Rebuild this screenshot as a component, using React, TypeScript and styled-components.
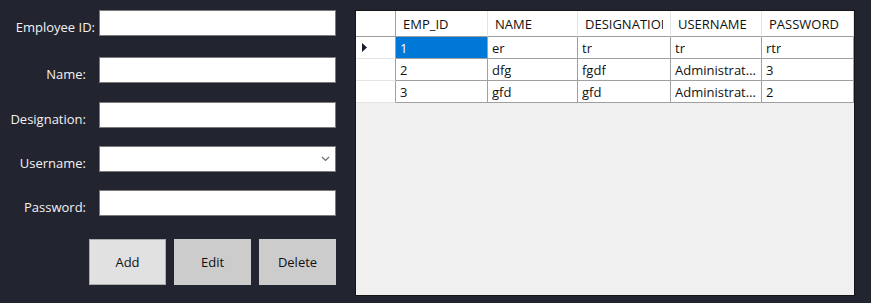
import React from 'react';
import styled, { createGlobalStyle } from 'styled-components';

const GlobalStyle = createGlobalStyle`
    html, body {
        margin: 0;
        padding: 0;
        background: #222430;
    }
    body {
        font-family: 'Open Sans', 'Liberation Sans', sans-serif;
        font-size: 13px;
    }
`;

const Page = styled.div`
    display: flex;
    align-items: flex-start;
    height: 303px;
    box-sizing: border-box;
    padding-top: 10px;
    background: #222430;
`;

const FormPanel = styled.div`
    display: flex;
    flex-direction: column;
    width: 336px;
`;

const FieldRow = styled.div<{ gapTop: number }>`
    display: flex;
    align-items: flex-start;
    height: 26px;
    margin-top: ${(p) => p.gapTop}px;
`;

const Label = styled.label<{ padRight: number }>`
    width: 99px;
    height: 26px;
    box-sizing: border-box;
    padding-right: ${(p) => p.padRight}px;
    padding-top: 8px;
    line-height: 18px;
    text-align: right;
    color: #f2f2f2;
    white-space: nowrap;
`;

const TextBox = styled.div`
    width: 237px;
    height: 26px;
    box-sizing: border-box;
    border: 1px solid #7a7a7a;
    background: #ffffff;
`;

const ComboBox = styled(TextBox)`
    display: flex;
    align-items: center;
    justify-content: flex-end;
    padding-right: 5px;
`;

const ButtonRow = styled.div`
    display: flex;
    gap: 8px;
    margin-top: 23px;
    margin-left: 89px;
`;

const ActionButton = styled.button<{ focused?: boolean }>`
    width: 77px;
    height: 46px;
    box-sizing: border-box;
    border: 1px solid ${(p) => (p.focused ? '#adadad' : '#cccccc')};
    background: ${(p) => (p.focused ? '#e1e1e1' : '#cccccc')};
    color: #111111;
    font-family: inherit;
    font-size: 13px;
    padding: 0;
`;

const Grid = styled.div`
    margin-left: 19px;
    width: 500px;
    height: 286px;
    box-sizing: border-box;
    border: 1px solid #151515;
    background: #f0f0f0;
    display: grid;
    grid-template-columns: 40px 92px 90px 93px 91px 92px;
    grid-template-rows: 26px repeat(3, 22px);
    align-content: start;
`;

const HeaderCell = styled.div<{ corner?: boolean }>`
    box-sizing: border-box;
    background: #ffffff;
    border-bottom: 1px solid #a0a0a0;
    border-right: 1px solid ${(p) => (p.corner ? '#a0a0a0' : '#e4e4e4')};
    padding: 0 7px 0 7px;
    display: flex;
    align-items: center;
    overflow: hidden;
    white-space: nowrap;
    color: #111111;
`;

const HeaderText = styled.span`
    display: block;
    overflow: hidden;
    white-space: nowrap;
`;

const RowHeader = styled.div`
    box-sizing: border-box;
    background: #ffffff;
    border-bottom: 1px solid #e4e4e4;
    border-right: 1px solid #a0a0a0;
    display: flex;
    align-items: center;
    padding-left: 6px;
`;

const Cell = styled.div<{ selected?: boolean }>`
    box-sizing: border-box;
    background: ${(p) => (p.selected ? '#0078d7' : '#ffffff')};
    color: ${(p) => (p.selected ? '#ffffff' : '#111111')};
    border-bottom: 1px solid #a0a0a0;
    border-right: 1px solid #a0a0a0;
    padding: 0 5px 0 4px;
    display: flex;
    align-items: center;
    min-width: 0;
`;

const CellText = styled.span`
    overflow: hidden;
    white-space: nowrap;
    text-overflow: ellipsis;
`;

const columns = ['EMP_ID', 'NAME', 'DESIGNATION', 'USERNAME', 'PASSWORD'];

const rows = [
    ['1', 'er', 'tr', 'tr', 'rtr'],
    ['2', 'dfg', 'fgdf', 'Administrator', '3'],
    ['3', 'gfd', 'gfd', 'Administrator', '2'],
];

const fields = [
    { label: 'Employee ID:', pad: 4, gap: 0 },
    { label: 'Name:', pad: 13, gap: 21 },
    { label: 'Designation:', pad: 13, gap: 19 },
    { label: 'Username:', pad: 13, gap: 18, combo: true },
    { label: 'Password:', pad: 13, gap: 18 },
];

const Chevron = () => (
    <svg width="9" height="6" viewBox="0 0 9 6">
        <polyline points="1,1 4.5,4.5 8,1" fill="none" stroke="#6a6a6a" strokeWidth="1.2" />
    </svg>
);

const CurrentRowArrow = () => (
    <svg width="6" height="9" viewBox="0 0 6 9">
        <polygon points="0,0 5,4.5 0,9" fill="#1a1a2a" />
    </svg>
);

export default function App() {
    return (
        <>
            <GlobalStyle />
            <Page>
                <FormPanel>
                    {fields.map((f) => (
                        <FieldRow key={f.label} gapTop={f.gap}>
                            <Label padRight={f.pad}>{f.label}</Label>
                            {f.combo ? (
                                <ComboBox>
                                    <Chevron />
                                </ComboBox>
                            ) : (
                                <TextBox />
                            )}
                        </FieldRow>
                    ))}
                    <ButtonRow>
                        <ActionButton focused>Add</ActionButton>
                        <ActionButton>Edit</ActionButton>
                        <ActionButton>Delete</ActionButton>
                    </ButtonRow>
                </FormPanel>
                <Grid>
                    <HeaderCell corner />
                    {columns.map((c) => (
                        <HeaderCell key={c}>
                            <HeaderText>{c}</HeaderText>
                        </HeaderCell>
                    ))}
                    {rows.map((r, i) => (
                        <React.Fragment key={r[0]}>
                            <RowHeader>{i === 0 && <CurrentRowArrow />}</RowHeader>
                            {r.map((v, j) => (
                                <Cell key={j} selected={i === 0 && j === 0}>
                                    <CellText>{v}</CellText>
                                </Cell>
                            ))}
                        </React.Fragment>
                    ))}
                </Grid>
            </Page>
        </>
    );
}
